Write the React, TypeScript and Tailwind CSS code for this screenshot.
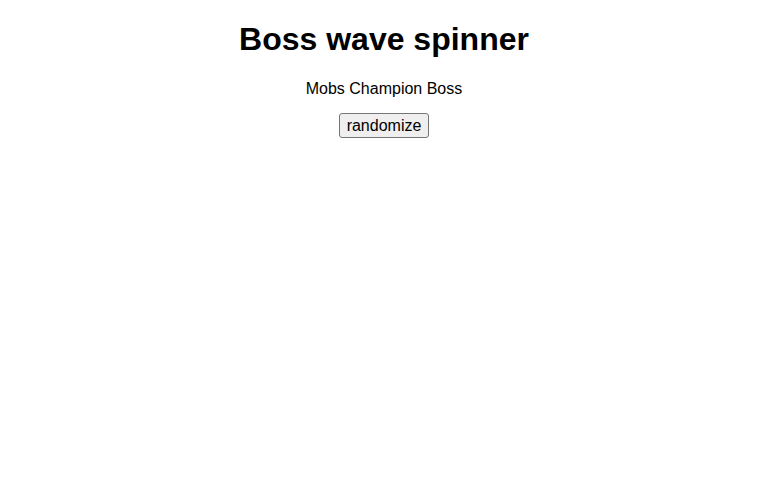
import { useState } from 'react'

const WAVES = ['Mobs', 'Champion', 'Boss']

export default function App() {
  const [waves, setWaves] = useState(WAVES)

  function randomize() {
    setWaves([...waves].sort(() => Math.random() - 0.5))
  }

  return (
    <div className="min-h-[480px] bg-white text-center text-black font-['Liberation_Sans',Arial,sans-serif]">
      <h1 className="pt-[21px] text-[32px] font-bold leading-[37px]">Boss wave spinner</h1>
      <p className="mt-[22px] text-base leading-[18px]">{waves.join(' ')}</p>
      <div className="mt-[15px]">
        <button
          type="button"
          onClick={randomize}
          className="rounded-[3px] border border-[#767676] bg-[#efefef] px-[7px] py-[2px] text-base leading-[19px] text-black"
        >
          randomize
        </button>
      </div>
    </div>
  )
}
